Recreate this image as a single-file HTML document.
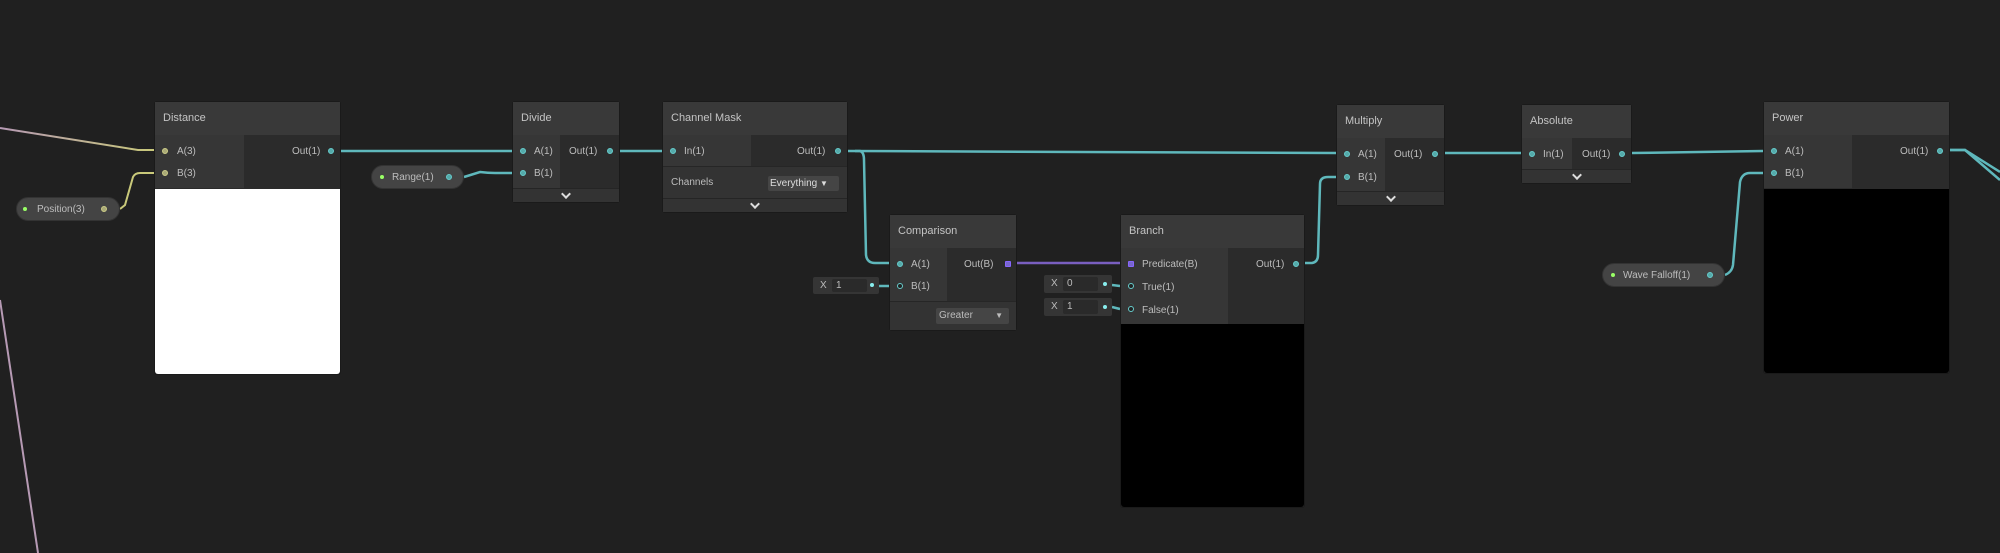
<!DOCTYPE html>
<html><head><meta charset="utf-8"><style>
*{margin:0;padding:0;box-sizing:border-box}
body{width:2000px;height:553px;background:#202020;overflow:hidden;position:relative;font-family:"Liberation Sans",sans-serif;color:#bdbdbd;font-size:10px}
.n{position:absolute;background:#2b2b2b;border:1px solid #1a1a1a;border-radius:3px}
.h{position:absolute;left:0;right:0;top:0;background:#393939;font-size:11px;padding-left:8px;color:#c4c4c4}
.lc{position:absolute;left:0;background:#363636}
.t{position:absolute;white-space:nowrap;line-height:12px}
.chev{position:absolute;left:0;right:0;background:#333;border-top:1px solid #252525}
.chev:after{content:"";position:absolute;left:50%;top:35%;width:5px;height:5px;border-right:2px solid #ddd;border-bottom:2px solid #ddd;transform:translate(-50%,-50%) rotate(45deg)}
.pill{position:absolute;background:#444;border-radius:12px;border:1px solid #333}
.dot{position:absolute;width:6px;height:6px;border-radius:50%;border:1px solid #6cc;background:#5aa}
.dy{border-color:#cc8;background:#aa7}
.field{position:absolute;background:#353535;border-radius:2px}
.field .in{position:absolute;top:2px;bottom:2px;background:#2a2a2a;border-radius:2px}
</style></head><body>
<svg width="2000" height="553" style="position:absolute;left:0;top:0" fill="none">
<defs><linearGradient id="g1" x1="0" x2="1"><stop offset="0" stop-color="#b69ab4"/><stop offset="1" stop-color="#c9c97a"/></linearGradient></defs>
<path d="M0 128 L138 150 L155 150" stroke="url(#g1)" stroke-width="2"/>
<path d="M0 300 L38 553" stroke="#b69ab4" stroke-width="2"/>
<path d="M120 209 L125 205 L133 177 Q135 173 140 173 L155 173" stroke="#c9c97a" stroke-width="2"/>
<g stroke="#5fb8bc" stroke-width="2.5">
<path d="M341 151 L512 151"/>
<path d="M464 177 L480 172 Q488 173 495 173 L512 173"/>
<path d="M620 151 L662 151"/>
<path d="M848 151 L1336 153"/>
<path d="M855 151 L860 151 Q864 152 864 160 L866 255 Q867 263 875 263 L889 263"/>
<path d="M1305 263 L1312 263 Q1318 262 1318 255 L1320 184 Q1320 177 1328 177 L1336 177"/>
<path d="M1445 153 L1521 153"/>
<path d="M1632 153 L1763 151"/>
<path d="M1725 275 Q1732 272 1733 265 L1740 182 Q1742 173 1750 173 L1763 173"/>
<path d="M1950 150 L1965 150 L2000 172"/>
<path d="M1950 150 L1965 150 L2000 180"/>
<path d="M879 286 L889 286"/>
<path d="M1112 285 L1120 286"/>
<path d="M1112 307 L1120 309"/>
</g>
<path d="M1017 263 L1120 263" stroke="#7a5fc0" stroke-width="2.5"/>
</svg>

<div class="pill" style="left:16px;top:197px;width:104px;height:24px"><div class="dot" style="left:6px;top:9px;width:4px;height:4px;border:none;background:#9f6"></div><div class="t" style="left:20px;top:6px">Position(3)</div><div class="dot dy" style="left:84px;top:8px"></div></div>
<div class="pill" style="left:371px;top:165px;width:93px;height:24px"><div class="dot" style="left:8px;top:9px;width:4px;height:4px;border:none;background:#9f6"></div><div class="t" style="left:20px;top:6px">Range(1)</div><div class="dot" style="left:74px;top:8px"></div></div>
<div class="pill" style="left:1602px;top:263px;width:123px;height:24px"><div class="dot" style="left:8px;top:9px;width:4px;height:4px;border:none;background:#9f6"></div><div class="t" style="left:20px;top:6px">Wave Falloff(1)</div><div class="dot" style="left:104px;top:8px"></div></div>

<div class="n" style="left:154px;top:101px;width:187px;height:274px">
<div class="h" style="height:33px;line-height:33px">Distance</div>
<div class="lc" style="top:33px;width:89px;height:53px"></div>
<div class="dot dy" style="left:7px;top:46px"></div><div class="t" style="left:22px;top:44px">A(3)</div>
<div class="dot dy" style="left:7px;top:68px"></div><div class="t" style="left:22px;top:66px">B(3)</div>
<div class="t" style="left:137px;top:44px">Out(1)</div><div class="dot" style="left:173px;top:46px"></div>
<div style="position:absolute;left:0;right:0;top:87px;bottom:0;background:#fff;border-radius:0 0 3px 3px"></div>
</div>

<div class="n" style="left:512px;top:101px;width:108px;height:102px">
<div class="h" style="height:33px;line-height:33px">Divide</div>
<div class="lc" style="top:33px;width:47px;height:53px"></div>
<div class="dot" style="left:7px;top:46px"></div><div class="t" style="left:21px;top:44px">A(1)</div>
<div class="dot" style="left:7px;top:68px"></div><div class="t" style="left:21px;top:66px">B(1)</div>
<div class="t" style="left:56px;top:44px">Out(1)</div><div class="dot" style="left:94px;top:46px"></div>
<div class="chev" style="top:86px;bottom:0"></div>
</div>

<div class="n" style="left:662px;top:101px;width:186px;height:112px">
<div class="h" style="height:33px;line-height:33px">Channel Mask</div>
<div class="lc" style="top:33px;width:88px;height:31px"></div>
<div class="dot" style="left:7px;top:46px"></div><div class="t" style="left:21px;top:44px">In(1)</div>
<div class="t" style="left:134px;top:44px">Out(1)</div><div class="dot" style="left:172px;top:46px"></div>
<div style="position:absolute;left:0;right:0;top:64px;height:32px;background:#333;border-top:1px solid #262626"></div>
<div class="t" style="left:8px;top:75px">Channels</div>
<div style="position:absolute;left:105px;top:74px;width:71px;height:15px;background:#454545;border-radius:2px;color:#ddd;padding-left:2px;line-height:15px">Everything <span style="font-size:8px">▼</span></div>
<div class="chev" style="top:96px;bottom:0"></div>
</div>

<div class="n" style="left:889px;top:214px;width:128px;height:117px">
<div class="h" style="height:33px;line-height:33px">Comparison</div>
<div class="lc" style="top:33px;width:57px;height:53px"></div>
<div class="dot" style="left:7px;top:46px"></div><div class="t" style="left:21px;top:44px">A(1)</div>
<div class="dot" style="left:7px;top:68px;background:#222"></div><div class="t" style="left:21px;top:66px">B(1)</div>
<div class="t" style="left:74px;top:44px">Out(B)</div><div class="dot" style="left:115px;top:46px;border-color:#86f;background:#76c;border-radius:1px"></div>
<div style="position:absolute;left:0;right:0;top:86px;bottom:0;background:#333;border-top:1px solid #262626"></div>
<div style="position:absolute;left:46px;top:93px;width:73px;height:16px;background:#454545;border-radius:2px;line-height:16px;padding-left:3px">Greater<span style="position:absolute;right:6px;font-size:8px">▼</span></div>
</div>

<div class="field" style="left:813px;top:277px;width:66px;height:17px"><div class="t" style="left:7px;top:3px">X</div><div class="in" style="left:19px;width:35px"></div><div class="t" style="left:23px;top:3px">1</div><div class="dot" style="left:57px;top:6px;width:4px;height:4px;border:none;background:#8ee"></div></div>
<div class="field" style="left:1044px;top:275px;width:68px;height:18px"><div class="t" style="left:7px;top:3px">X</div><div class="in" style="left:19px;width:35px"></div><div class="t" style="left:23px;top:3px">0</div><div class="dot" style="left:59px;top:7px;width:4px;height:4px;border:none;background:#8ee"></div></div>
<div class="field" style="left:1044px;top:298px;width:68px;height:18px"><div class="t" style="left:7px;top:3px">X</div><div class="in" style="left:19px;width:35px"></div><div class="t" style="left:23px;top:3px">1</div><div class="dot" style="left:59px;top:7px;width:4px;height:4px;border:none;background:#8ee"></div></div>

<div class="n" style="left:1120px;top:214px;width:185px;height:294px">
<div class="h" style="height:33px;line-height:33px">Branch</div>
<div class="lc" style="top:33px;width:107px;height:76px"></div>
<div class="dot" style="left:7px;top:46px;border-color:#86f;background:#76c;border-radius:1px"></div><div class="t" style="left:21px;top:44px">Predicate(B)</div>
<div class="dot" style="left:7px;top:68px;background:#222"></div><div class="t" style="left:21px;top:67px">True(1)</div>
<div class="dot" style="left:7px;top:91px;background:#222"></div><div class="t" style="left:21px;top:90px">False(1)</div>
<div class="t" style="left:135px;top:44px">Out(1)</div><div class="dot" style="left:172px;top:46px"></div>
<div style="position:absolute;left:0;right:0;top:109px;bottom:0;background:#000;border-radius:0 0 3px 3px"></div>
</div>

<div class="n" style="left:1336px;top:104px;width:109px;height:102px">
<div class="h" style="height:33px;line-height:33px">Multiply</div>
<div class="lc" style="top:33px;width:48px;height:53px"></div>
<div class="dot" style="left:7px;top:46px"></div><div class="t" style="left:21px;top:44px">A(1)</div>
<div class="dot" style="left:7px;top:69px"></div><div class="t" style="left:21px;top:67px">B(1)</div>
<div class="t" style="left:57px;top:44px">Out(1)</div><div class="dot" style="left:95px;top:46px"></div>
<div class="chev" style="top:86px;bottom:0"></div>
</div>

<div class="n" style="left:1521px;top:104px;width:111px;height:80px">
<div class="h" style="height:33px;line-height:33px">Absolute</div>
<div class="lc" style="top:33px;width:50px;height:31px"></div>
<div class="dot" style="left:7px;top:46px"></div><div class="t" style="left:21px;top:44px">In(1)</div>
<div class="t" style="left:60px;top:44px">Out(1)</div><div class="dot" style="left:97px;top:46px"></div>
<div class="chev" style="top:64px;bottom:0"></div>
</div>

<div class="n" style="left:1763px;top:101px;width:187px;height:273px">
<div class="h" style="height:33px;line-height:33px">Power</div>
<div class="lc" style="top:33px;width:88px;height:53px"></div>
<div class="dot" style="left:7px;top:46px"></div><div class="t" style="left:21px;top:44px">A(1)</div>
<div class="dot" style="left:7px;top:68px"></div><div class="t" style="left:21px;top:66px">B(1)</div>
<div class="t" style="left:136px;top:44px">Out(1)</div><div class="dot" style="left:173px;top:46px"></div>
<div style="position:absolute;left:0;right:0;top:87px;bottom:0;background:#000;border-radius:0 0 3px 3px"></div>
</div>
</body></html>
